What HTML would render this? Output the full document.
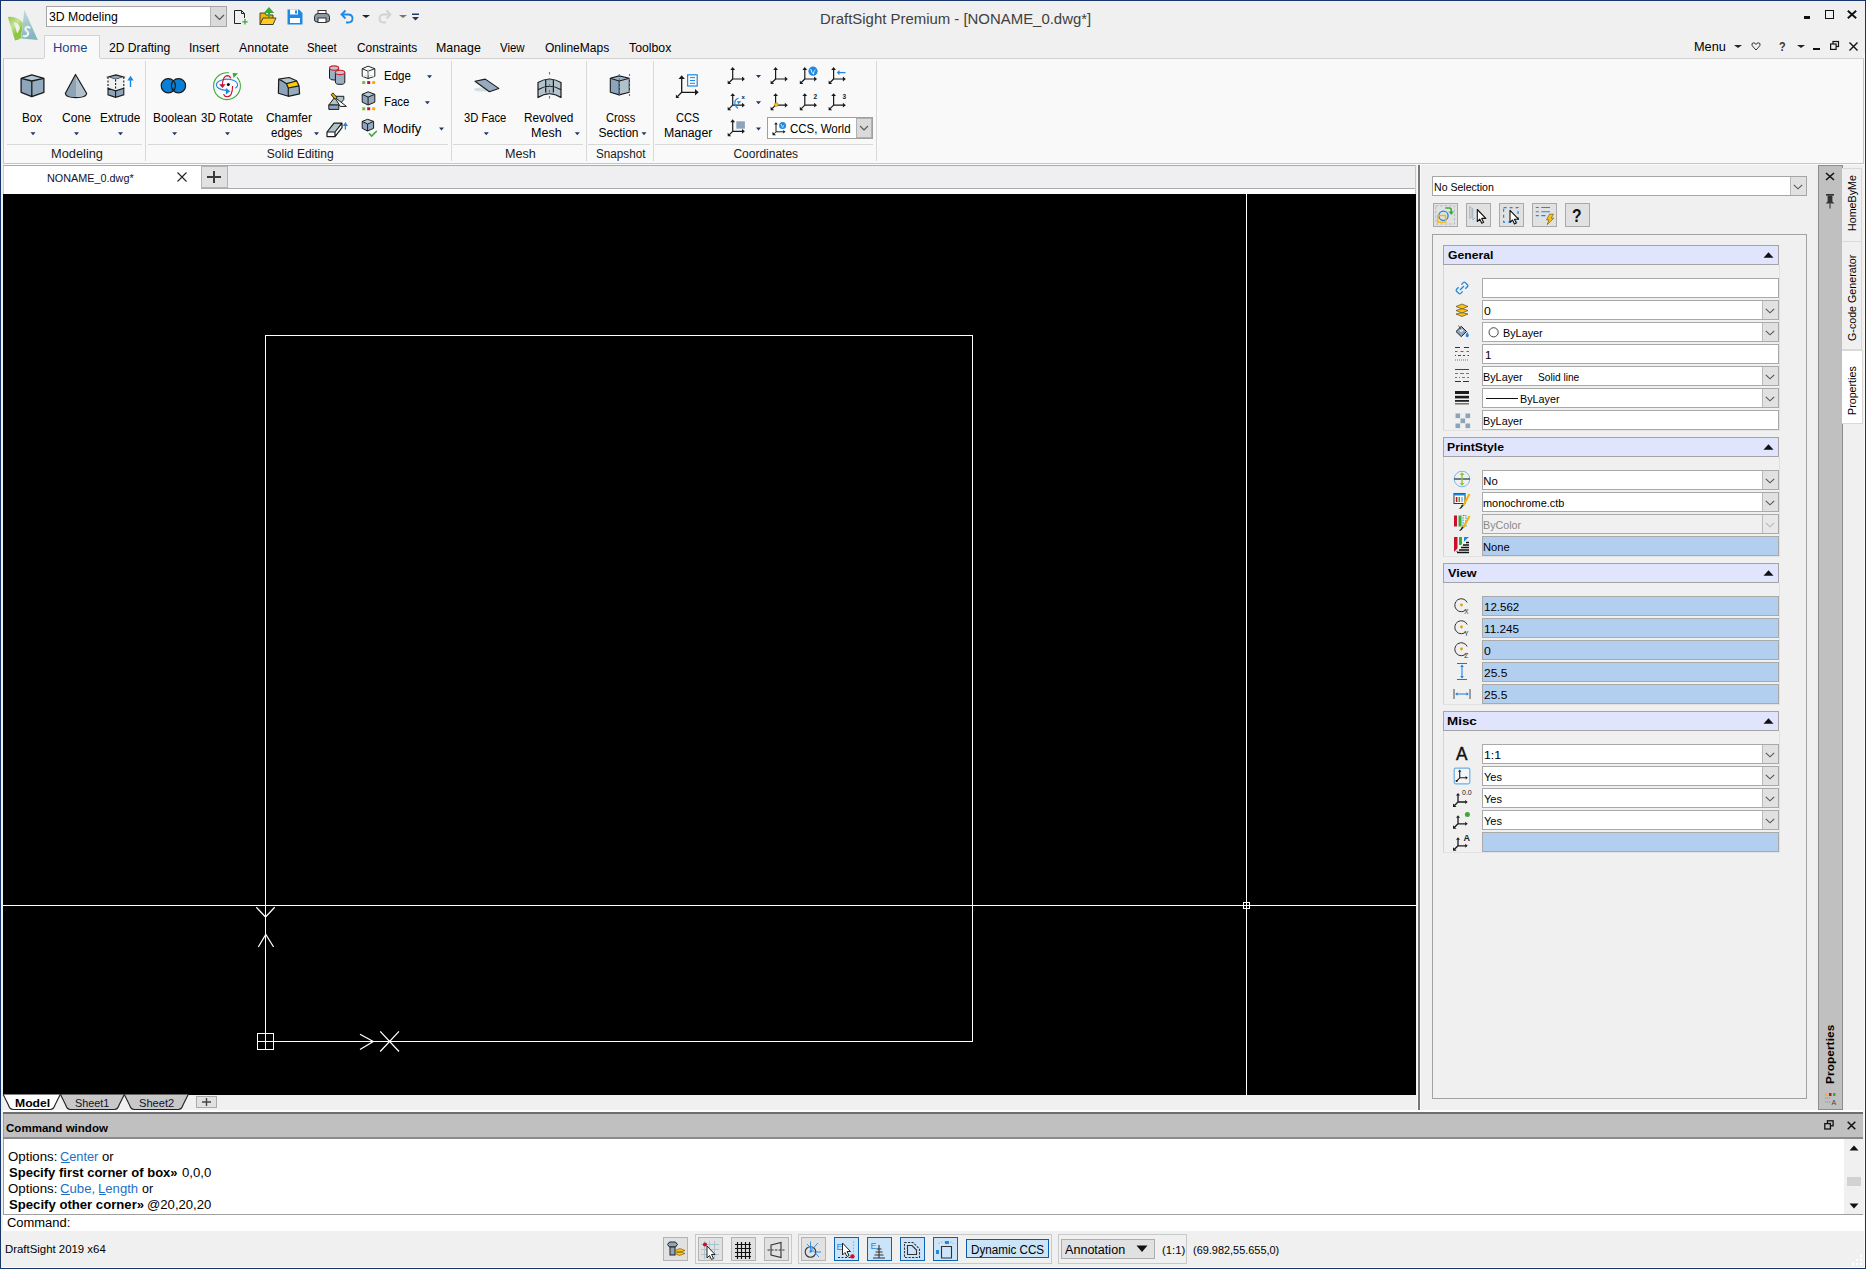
<!DOCTYPE html>
<html><head><meta charset="utf-8">
<style>
*{margin:0;padding:0;box-sizing:border-box}
html,body{width:1866px;height:1269px;overflow:hidden;background:#f0f0f0;font-family:"Liberation Sans",sans-serif;font-size:12px;color:#000}
.a{position:absolute}
.t{position:absolute;white-space:nowrap;line-height:1;transform-origin:0 0}
svg{position:absolute;overflow:visible}
</style></head><body>
<div class="t" style="left:820.41px;top:10.83px;font-size:15.00px;transform:scaleX(0.9948);color:#404040;">DraftSight Premium - [NONAME_0.dwg*]</div>
<svg style="left:0px;top:0px;" width="42" height="44" viewBox="0 0 42 44"><defs><linearGradient id="lg1" x1="0.2" y1="0" x2="0.8" y2="1"><stop offset="0" stop-color="#9ccd55"/><stop offset="0.35" stop-color="#c6e29c"/><stop offset="0.7" stop-color="#8cc43c"/><stop offset="1" stop-color="#93c84a"/></linearGradient><linearGradient id="lg2" x1="0" y1="0" x2="0.3" y2="1"><stop offset="0" stop-color="#c2dde2"/><stop offset="1" stop-color="#86b5bf"/></linearGradient></defs><path d="M24.3,9.8 L37.8,39.9 L21.3,38.5 Z" fill="url(#lg2)"/><path d="M7.8,17 Q13.5,15.8 19.1,19.2 Q22.5,21.5 22.9,23 L21,38.2 Q18,40 15,40.4 Z" fill="url(#lg1)"/><path d="M13.8,22.1 Q17.5,23 18.8,24.9 Q20,27 19.8,28.7 L17.2,33.8 Z" fill="#eef3ea"/><path d="M29.6,27.6 Q27.8,26.2 26,27.5 Q24.5,29.2 26.8,31 Q29,32.6 27.6,35 Q26,36.8 23.8,36" fill="none" stroke="#f0f3f3" stroke-width="2.1" stroke-linecap="round"/></svg>
<div class="a" style="left:46px;top:6px;width:181px;height:21px;background:#fff;border:1px solid #a5a5a5"></div>
<div class="a" style="left:210px;top:7px;width:16px;height:19px;background:#dadada;border-left:1px solid #b8b8b8"></div>
<svg style="left:214px;top:14px;" width="11" height="6.5" viewBox="0 0 11 6.5"><polyline points="1,1 5.5,5.5 10,1" fill="none" stroke="#555" stroke-width="1.2"/></svg>
<div class="t" style="left:48.51px;top:11.44px;font-size:12.50px;transform:scaleX(0.9800);color:#000;">3D Modeling</div>
<svg style="left:233px;top:9px;" width="16" height="16" viewBox="0 0 16 16"><path d="M1.5,1.5 L8.5,1.5 L11.5,4.5 L11.5,9 M8.5,1.5 L8.5,4.5 L11.5,4.5 M1.5,1.5 L1.5,14.5 L8,14.5" fill="none" stroke="#222" stroke-width="1"/><path d="M12,10 L12,15.5 M9.3,12.8 L14.7,12.8" stroke="#3aaa35" stroke-width="1.3"/></svg>
<svg style="left:259px;top:7px;" width="18" height="18" viewBox="0 0 18 18"><path d="M1,7 L1,17.5 L14,17.5 L14,8 L7,8 L6,6 L1,6 Z" fill="#f5b400" stroke="#333" stroke-width="0.9"/><path d="M1,17.5 L4,11 L17,11 L14,17.5 Z" fill="#ffcb1f" stroke="#333" stroke-width="0.9"/><path d="M10,10 L10,4 M7,5 L10,1.5 L13,5 Z" stroke="#3aaa35" fill="#3aaa35" stroke-width="2"/></svg>
<svg style="left:287px;top:9px;" width="16" height="16" viewBox="0 0 16 16"><path d="M0.5,0.5 L12,0.5 L15.5,4 L15.5,15.5 L0.5,15.5 Z" fill="#1e88e5"/><rect x="3" y="0.5" width="8" height="5" fill="#fff"/><rect x="8" y="1.5" width="2" height="3" fill="#1e88e5"/><rect x="3" y="9" width="10" height="5" fill="#fff"/></svg>
<svg style="left:314px;top:10px;" width="16" height="13" viewBox="0 0 16 13"><rect x="4" y="0.5" width="8" height="4" fill="#fff" stroke="#333"/><path d="M0.5,7 Q0.5,3.5 4,3.5 L12,3.5 Q15.5,3.5 15.5,7 L15.5,10 Q15.5,12 13,12 L3,12 Q0.5,12 0.5,10 Z" fill="#8d9aa6" stroke="#333"/><rect x="4" y="8" width="8" height="4.5" fill="#fff" stroke="#333"/></svg>
<svg style="left:340px;top:9px;" width="14" height="15" viewBox="0 0 14 15"><path d="M3,5.5 L8,5.5 Q12.5,5.5 12.5,9.5 Q12.5,13.5 8,13.5 L6,13.5" fill="none" stroke="#1e88e5" stroke-width="1.8"/><path d="M5.5,1.5 L1.5,5.5 L5.5,9.5" fill="none" stroke="#1e88e5" stroke-width="1.8"/></svg>
<svg style="left:361.5px;top:14.5px;" width="8" height="3" viewBox="0 0 8 3"><polygon points="0,0 8,0 4.0,3" fill="#222"/></svg>
<svg style="left:378px;top:9px;" width="14" height="15" viewBox="0 0 14 15"><path d="M11,5.5 L6,5.5 Q1.5,5.5 1.5,9.5 Q1.5,13.5 6,13.5 L8,13.5" fill="none" stroke="#d2d2d2" stroke-width="1.8"/><path d="M8.5,1.5 L12.5,5.5 L8.5,9.5" fill="none" stroke="#d2d2d2" stroke-width="1.8"/></svg>
<svg style="left:399.0px;top:14.5px;" width="8" height="3" viewBox="0 0 8 3"><polygon points="0,0 8,0 4.0,3" fill="#777"/></svg>
<svg style="left:412px;top:13px;" width="8" height="9" viewBox="0 0 8 9"><rect x="0" y="0.5" width="7" height="1.5" fill="#1f3864"/><polygon points="0,4 7,4 3.5,7.5" fill="#1f3864"/></svg>
<div class="a" style="left:1804px;top:15.5px;width:6px;height:3px;background:#111;"></div>
<div class="a" style="left:1825px;top:10px;width:9px;height:9px;background:transparent;border:1.3px solid #111"></div>
<svg style="left:1847px;top:10px;" width="10" height="9" viewBox="0 0 10 9"><path d="M0.8,0.8 L9.2,8.2 M9.2,0.8 L0.8,8.2" stroke="#111" stroke-width="1.9"/></svg>
<div class="a" style="left:44px;top:35px;width:56px;height:24px;background:#f9f9f9;border:1px solid #d3d3d3;border-bottom:none"></div>
<div class="t" style="left:53.17px;top:41.52px;font-size:12.40px;transform:scaleX(1.0414);color:#20408a;">Home</div>
<div class="t" style="left:109.09px;top:41.52px;font-size:12.40px;transform:scaleX(0.9779);color:#000;">2D Drafting</div>
<div class="t" style="left:188.71px;top:41.52px;font-size:12.40px;transform:scaleX(0.9758);color:#000;">Insert</div>
<div class="t" style="left:239.00px;top:41.52px;font-size:12.40px;color:#000;">Annotate</div>
<div class="t" style="left:307.49px;top:41.52px;font-size:12.40px;transform:scaleX(0.9136);color:#000;">Sheet</div>
<div class="t" style="left:356.81px;top:41.52px;font-size:12.40px;transform:scaleX(0.9596);color:#000;">Constraints</div>
<div class="t" style="left:436.01px;top:41.52px;font-size:12.40px;color:#000;">Manage</div>
<div class="t" style="left:500.34px;top:41.52px;font-size:12.40px;transform:scaleX(0.9249);color:#000;">View</div>
<div class="t" style="left:544.96px;top:41.52px;font-size:12.40px;transform:scaleX(0.9714);color:#000;">OnlineMaps</div>
<div class="t" style="left:629.05px;top:41.52px;font-size:12.40px;transform:scaleX(0.9895);color:#000;">Toolbox</div>
<div class="t" style="left:1694.48px;top:40.52px;font-size:12.40px;transform:scaleX(1.0273);color:#000;">Menu</div>
<svg style="left:1733.5px;top:45px;" width="8" height="3" viewBox="0 0 8 3"><polygon points="0,0 8,0 4.0,3" fill="#222"/></svg>
<svg style="left:1751px;top:42px;" width="10" height="9" viewBox="0 0 10 9"><path d="M5,8 L1.2,3.8 Q0,1 2.6,0.8 Q4.2,0.8 5,2.5 Q5.8,0.8 7.4,0.8 Q10,1 8.8,3.8 Z" fill="none" stroke="#333" stroke-width="1"/></svg>
<div class="t" style="left:1778.71px;top:41.44px;font-size:12.50px;font-weight:bold;transform:scaleX(0.8627);color:#333;">?</div>
<svg style="left:1796.5px;top:45px;" width="8" height="3" viewBox="0 0 8 3"><polygon points="0,0 8,0 4.0,3" fill="#222"/></svg>
<div class="a" style="left:1813px;top:48px;width:7px;height:2px;background:#111;"></div>
<svg style="left:1830px;top:41px;" width="9" height="9" viewBox="0 0 9 9"><rect x="3" y="0.5" width="5.5" height="5" fill="none" stroke="#111" stroke-width="1.2"/><rect x="0.6" y="3" width="5.5" height="5.4" fill="#f0f0f0" stroke="#111" stroke-width="1.2"/></svg>
<svg style="left:1849px;top:42px;" width="9" height="9" viewBox="0 0 9 9"><path d="M0.5,0.5 L8.5,8.5 M8.5,0.5 L0.5,8.5" stroke="#111" stroke-width="1.4"/></svg>
<div class="a" style="left:3px;top:58px;width:1861px;height:106px;background:#f9f9f9;border:1px solid #c6c6c6;border-top-color:#d2d2d2"></div>
<div class="a" style="left:3px;top:164px;width:1861px;height:1px;background:#fafafa;"></div>
<div class="a" style="left:44px;top:58px;width:56px;height:1px;background:#f9f9f9;"></div>
<div class="a" style="left:145px;top:61px;width:1px;height:100px;background:#d8d8d8;"></div>
<div class="a" style="left:451px;top:61px;width:1px;height:100px;background:#d8d8d8;"></div>
<div class="a" style="left:586px;top:61px;width:1px;height:100px;background:#d8d8d8;"></div>
<div class="a" style="left:653px;top:61px;width:1px;height:100px;background:#d8d8d8;"></div>
<div class="a" style="left:876px;top:61px;width:1px;height:100px;background:#d8d8d8;"></div>
<div class="a" style="left:7px;top:144px;width:135px;height:1px;background:#d8d8d8;"></div>
<div class="a" style="left:148px;top:144px;width:300px;height:1px;background:#d8d8d8;"></div>
<div class="a" style="left:453px;top:144px;width:130px;height:1px;background:#d8d8d8;"></div>
<div class="a" style="left:588px;top:144px;width:62px;height:1px;background:#d8d8d8;"></div>
<div class="a" style="left:655px;top:144px;width:218px;height:1px;background:#d8d8d8;"></div>
<div class="t" style="left:22.27px;top:111.66px;font-size:12.00px;transform:scaleX(0.9735);color:#000;">Box</div>
<div class="t" style="left:61.89px;top:111.66px;font-size:12.00px;transform:scaleX(1.0094);color:#000;">Cone</div>
<div class="t" style="left:100.46px;top:111.66px;font-size:12.00px;transform:scaleX(0.9764);color:#000;">Extrude</div>
<div class="t" style="left:152.65px;top:111.66px;font-size:12.00px;transform:scaleX(0.9929);color:#000;">Boolean</div>
<div class="t" style="left:200.74px;top:111.66px;font-size:12.00px;transform:scaleX(0.9626);color:#000;">3D Rotate</div>
<div class="t" style="left:265.90px;top:111.66px;font-size:12.00px;color:#000;">Chamfer</div>
<div class="t" style="left:271.04px;top:126.76px;font-size:12.00px;transform:scaleX(0.9591);color:#000;">edges</div>
<div class="t" style="left:383.58px;top:70.16px;font-size:12.00px;transform:scaleX(0.9615);color:#000;">Edge</div>
<div class="t" style="left:383.58px;top:95.86px;font-size:12.00px;transform:scaleX(0.9547);color:#000;">Face</div>
<div class="t" style="left:383.46px;top:122.86px;font-size:12.00px;transform:scaleX(1.0849);color:#000;">Modify</div>
<div class="t" style="left:464.15px;top:111.66px;font-size:12.00px;transform:scaleX(0.9337);color:#000;">3D Face</div>
<div class="t" style="left:524.05px;top:111.66px;font-size:12.00px;transform:scaleX(0.9855);color:#000;">Revolved</div>
<div class="t" style="left:531.00px;top:126.76px;font-size:12.00px;transform:scaleX(1.0435);color:#000;">Mesh</div>
<div class="t" style="left:605.84px;top:111.66px;font-size:12.00px;transform:scaleX(0.9340);color:#000;">Cross</div>
<div class="t" style="left:598.46px;top:126.76px;font-size:12.00px;color:#000;">Section</div>
<div class="t" style="left:676.45px;top:111.66px;font-size:12.00px;transform:scaleX(0.9222);color:#000;">CCS</div>
<div class="t" style="left:663.82px;top:126.76px;font-size:12.00px;transform:scaleX(1.0195);color:#000;">Manager</div>
<div class="t" style="left:50.77px;top:148.06px;font-size:12.00px;transform:scaleX(1.0678);color:#1a1a1a;">Modeling</div>
<div class="t" style="left:266.86px;top:148.06px;font-size:12.00px;color:#1a1a1a;">Solid Editing</div>
<div class="t" style="left:504.99px;top:148.06px;font-size:12.00px;transform:scaleX(1.0507);color:#1a1a1a;">Mesh</div>
<div class="t" style="left:596.47px;top:148.06px;font-size:12.00px;transform:scaleX(0.9741);color:#1a1a1a;">Snapshot</div>
<div class="t" style="left:733.40px;top:148.06px;font-size:12.00px;color:#1a1a1a;">Coordinates</div>
<svg style="left:0;top:0" width="1866" height="200"><path d="M31.8,74.9 L43.9,78.4 L31.8,81.0 L21.1,78.4 Z" fill="#b5c7d3"/><path d="M21.1,78.4 L31.8,81.0 L31.8,96.6 L21.1,92.3 Z" fill="#8ea4bb"/><path d="M31.8,81.0 L43.9,78.4 L43.9,92.3 L31.8,96.6 Z" fill="#94abc0"/><path d="M31.8,74.9 L43.9,78.4 L43.9,92.3 L31.8,96.6 L21.1,92.3 L21.1,78.4 Z M21.1,78.4 L31.8,81.0 L43.9,78.4 M31.8,81.0 L31.8,96.6" fill="none" stroke="#1a1a1a" stroke-width="1.3" stroke-linejoin="round"/><path d="M75.5,74.5 L65.3,93.5 Q65.5,97.5 76,97.6 L76,74.5 Z" fill="#8ea3b8"/><path d="M75.5,74.5 L86.7,93.5 Q86.5,97.5 76,97.6 L76,74.5 Z" fill="#b2c2cd"/><path d="M75.5,74.5 L65.3,93.5 Q66,97.6 76,97.6 Q86,97.6 86.7,93.5 Z" fill="none" stroke="#1a1a1a" stroke-width="1.2" stroke-linejoin="round"/><path d="M115.9,74.9 L123.8,77 L115.6,79.5 L108,77 Z" fill="#8ea4bb" stroke="#1a1a1a" stroke-width="1.1"/><path d="M108,77 L108,88 L115.6,90.5 L123.8,88 L123.8,77 L115.6,79.5 Z" fill="#f0f2f2"/><path d="M108,77 L108,88.5 M123.8,77 L123.8,88.5 M115.6,79.5 L115.6,90.5" stroke="#1a1a1a" stroke-width="1.1" stroke-dasharray="2,1.5"/><path d="M108,88.3 L115.6,90.8 L123.8,88.3 L123.8,94.8 L115.6,97.3 L108,94.8 Z" fill="#8ea4bb" stroke="#1a1a1a" stroke-width="1.1"/><path d="M115.6,90.8 L115.6,97.3" stroke="#1a1a1a" stroke-width="1.1"/><path d="M130.5,87 L130.5,79" stroke="#1e88e5" stroke-width="1.4"/><polygon points="127.3,80.5 133.7,80.5 130.5,75.8" fill="#1e88e5"/><polygon points="30.5,132.2 35.5,132.2 33.0,135.2" fill="#1f3864"/><polygon points="74.0,132.2 79.0,132.2 76.5,135.2" fill="#1f3864"/><polygon points="118.0,132.2 123.0,132.2 120.5,135.2" fill="#1f3864"/><polygon points="172.1,132.2 177.1,132.2 174.6,135.2" fill="#1f3864"/><polygon points="225.0,132.2 230.0,132.2 227.5,135.2" fill="#1f3864"/><polygon points="314.0,132.2 319.0,132.2 316.5,135.2" fill="#1f3864"/><polygon points="483.8,132.2 488.8,132.2 486.3,135.2" fill="#1f3864"/><polygon points="574.8,132.2 579.8,132.2 577.3,135.2" fill="#1f3864"/><polygon points="641.5,132.2 646.5,132.2 644.0,135.2" fill="#1f3864"/><circle cx="168.3" cy="85.7" r="7.1" fill="#0a7fd6"/><circle cx="178.5" cy="85.7" r="7.1" fill="#0a7fd6"/><circle cx="168.3" cy="85.7" r="7.1" fill="none" stroke="#1a1a1a" stroke-width="1.2"/><circle cx="178.5" cy="85.7" r="7.1" fill="none" stroke="#1a1a1a" stroke-width="1.2"/><path d="M228.86,72.83 A13.4,13.4 0 1,0 236.96,77.13" fill="none" stroke="#3aaa35" stroke-width="1.1"/><polygon points="232.6,72.9 238,73.3 233.6,78" fill="#3aaa35"/><path d="M235.35,88.25 A10.6,5.6 0 1,0 226.08,90.38" fill="none" stroke="#1e88e5" stroke-width="1.1"/><path d="M222.3,85.5 Q222.8,76.2 227,75.6 Q229.8,75.6 230.8,78.4 M232.6,86 Q232.5,96.8 227,96.8 Q224.5,96.6 223.5,94.3" fill="none" stroke="#c8102e" stroke-width="1.1"/><polygon points="219.2,84.2 225.6,84.2 222.4,87.9" fill="#c8102e"/><polygon points="225.9,88 225.9,94.6 230.2,91.2" fill="#1e88e5"/><circle cx="228.3" cy="84.5" r="1.5" fill="#111"/><path d="M278.7,79.1 L289.1,77.5 L296.6,80.8 L286.5,83.7 Q282,80.5 278.7,79.1 Z" fill="#b4c6d2"/><path d="M286.5,83.7 L296.6,81 L299,85.8 L288.3,88 Z" fill="#ffcc00"/><path d="M278.7,79.1 Q282,80.5 286.5,83.7 L288.3,88 L288.3,96.3 L278.4,93.3 Z" fill="#8ea4bb"/><path d="M288.3,88 L299,85.8 L299.6,93.9 L288.3,96.3 Z" fill="#94abc0"/><path d="M278.7,79.1 L289.1,77.5 L296.6,80.8 L299,85.8 L299.6,93.9 L288.3,96.3 L278.4,93.3 Z M278.7,79.1 Q282,80.5 286.5,83.7 L288.3,88 L288.3,96.3 M286.5,83.7 L296.6,81 M288.3,88 L299,85.8" fill="none" stroke="#1a1a1a" stroke-width="1.2" stroke-linejoin="round"/><path d="M329.5,68.1 L329.5,78.1 A4.6,2.3 0 0,0 338.6,78.1 L338.6,68.1 Z" fill="#9ab0c4" stroke="#1a1a1a" stroke-width="1.0"/><ellipse cx="334.1" cy="68.1" rx="4.6" ry="2.2" fill="#b9c9d1" stroke="#d0202a" stroke-width="1.1"/><path d="M335.4,72.4 L335.4,82.1 A4.7,2.3 0 0,0 344.8,82.1 L344.8,72.4 Z" fill="#9ab0c4" stroke="#1a1a1a" stroke-width="1.0"/><ellipse cx="340.1" cy="72.4" rx="4.7" ry="2.2" fill="#b9c9d1" stroke="#d0202a" stroke-width="1.1"/><path d="M328.8,105 L335.5,96.3 L343.8,96.3 L343.8,99.5 L338.8,105.2 Z" fill="#b0c4cc" stroke="#1a1a1a" stroke-width="1"/><path d="M328.8,105 L338.8,105 L338.8,109.4 L328.8,109.4 Z" fill="#8ea4bb" stroke="#1a1a1a" stroke-width="1"/><path d="M334.5,97 L346.4,106.4 L340.2,106.4 Z" fill="#fff" stroke="#1a1a1a" stroke-width="1"/><path d="M331.8,93.6 L336.3,98.6" stroke="#1a1a1a" stroke-width="3.2"/><path d="M332.2,94 L335.9,98.2" stroke="#f5b400" stroke-width="1.8"/><path d="M327,132 L334,123.2 L342,123.2 L335,132 Z" fill="#b0c4cc"/><path d="M327,132 L335,132 L335,136.6 L327,136.6 Z M335,132 L342,123.2 L342,127.6 L335,136.6 Z" fill="#fff"/><path d="M327,132 L334,123.2 L342,123.2 L342,127.6 L335,136.6 L327,136.6 Z M327,132 L335,132 L342,123.2 M335,132 L335,136.6" fill="none" stroke="#1a1a1a" stroke-width="1.2" stroke-linejoin="round"/><path d="M345.4,129.6 L345.4,125" stroke="#1e88e5" stroke-width="1.3"/><polygon points="342.8,126 348,126 345.4,122" fill="#1e88e5"/><path d="M368.1,66.2 L374.8,68.7 L368.1,71.2 L362.2,68.7 Z" fill="#fbfcfc"/><path d="M362.2,68.7 L368.1,71.2 L368.1,78.5 L362.2,76.3 Z" fill="#fbfcfc"/><path d="M368.1,71.2 L374.8,68.7 L374.8,76.3 L368.1,78.5 Z" fill="#fbfcfc"/><path d="M368.1,66.2 L374.8,68.7 L374.8,76.3 L368.1,78.5 L362.2,76.3 L362.2,68.7 Z M362.2,68.7 L368.1,71.2 L374.8,68.7 M368.1,71.2 L368.1,78.5" fill="none" stroke="#1a1a1a" stroke-width="0.95" stroke-linejoin="round"/><path d="M368.2,68.5 L368.2,74.5 L362.8,76.8 M368.2,74.5 L374.2,76.8" stroke="#c8d4dc" stroke-width="0.8" fill="none"/><path d="M368.1,91.8 L374.8,94.3 L368.1,97.1 L362.2,94.3 Z" fill="#b5c7d3"/><path d="M362.2,94.3 L368.1,97.1 L368.1,105.0 L362.2,102.2 Z" fill="#8ea4bb"/><path d="M368.1,97.1 L374.8,94.3 L374.8,102.2 L368.1,105.0 Z" fill="#94abc0"/><path d="M368.1,91.8 L374.8,94.3 L374.8,102.2 L368.1,105.0 L362.2,102.2 L362.2,94.3 Z M362.2,94.3 L368.1,97.1 L374.8,94.3 M368.1,97.1 L368.1,105.0" fill="none" stroke="#1a1a1a" stroke-width="1.0" stroke-linejoin="round"/><path d="M367.6,119.3 L373.6,121.4 L367.6,124.0 L362.2,121.4 Z" fill="#b5c7d3"/><path d="M362.2,121.4 L367.6,124.0 L367.6,131.0 L362.2,128.3 Z" fill="#8ea4bb"/><path d="M367.6,124.0 L373.6,121.4 L373.6,128.3 L367.6,131.0 Z" fill="#94abc0"/><path d="M367.6,119.3 L373.6,121.4 L373.6,128.3 L367.6,131.0 L362.2,128.3 L362.2,121.4 Z M362.2,121.4 L367.6,124.0 L373.6,121.4 M367.6,124.0 L367.6,131.0" fill="none" stroke="#1a1a1a" stroke-width="1.0" stroke-linejoin="round"/><rect x="362.2" y="81.1" width="3" height="2.9" fill="#7bbd2a"/><rect x="367.2" y="81.1" width="3" height="2.9" fill="#c8102e"/><rect x="372.2" y="81.1" width="3" height="2.9" fill="#ffa800"/><rect x="362.2" y="107.3" width="3" height="2.9" fill="#7bbd2a"/><rect x="367.2" y="107.3" width="3" height="2.9" fill="#c8102e"/><rect x="372.2" y="107.3" width="3" height="2.9" fill="#ffa800"/><path d="M369,133.2 L371.6,136 L376.8,131" fill="none" stroke="#3aaa35" stroke-width="1.6"/><polygon points="427.0,75.2 432.0,75.2 429.5,78.2" fill="#1f3864"/><polygon points="424.9,101.2 429.9,101.2 427.4,104.2" fill="#1f3864"/><polygon points="439.0,127.4 444.0,127.4 441.5,130.4" fill="#1f3864"/><ellipse cx="482" cy="89.5" rx="8" ry="2" fill="#c9d6dc" opacity="0.8"/><path d="M475,81.2 L485.3,79.1 L498.8,88.4 L489.4,91.7 Z" fill="#94abc0" stroke="#1a1a1a" stroke-width="1.1" stroke-linejoin="round"/><path d="M538,82.5 Q549.5,75.5 561,82.5 L561,97.5 Q549.5,90 538,97.5 Z" fill="#b4c4cc"/><path d="M545.7,79.3 L553.4,79.3 L553.4,93 L545.7,93 Z" fill="#a9bac4"/><path d="M538,82.5 Q549.5,75.5 561,82.5 L561,97.5 Q549.5,90 538,97.5 Z M538,89.8 Q549.5,82.7 561,89.8 M545.7,79.2 L545.7,92.5 M553.4,79.2 L553.4,92.5" fill="none" stroke="#1a1a1a" stroke-width="1.2" stroke-linejoin="round"/><path d="M549.5,72 L549.5,98.5" stroke="#1e88e5" stroke-width="1.1" stroke-dasharray="2.5,3.5"/><path d="M619.2,75.9 L629.3,78.2 L619.2,81.0 L610.3,78.2 Z" fill="#a3b6c5"/><path d="M610.3,78.2 L619.2,81.0 L619.2,94.9 L610.3,92.2 Z" fill="#8ea4bb"/><path d="M619.2,81.0 L629.3,78.2 L629.3,92.2 L619.2,94.9 Z" fill="#b1c1c9"/><path d="M619.2,75.9 L629.3,78.2 L629.3,92.2 L619.2,94.9 L610.3,92.2 L610.3,78.2 Z M610.3,78.2 L619.2,81.0 L629.3,78.2 M619.2,81.0 L619.2,94.9" fill="none" stroke="#1a1a1a" stroke-width="1.1" stroke-linejoin="round"/><path d="M619.3,74 L619.3,96.5 M629.5,74 L629.5,96.5" stroke="#1e88e5" stroke-width="1.1" stroke-dasharray="2,2"/><path d="M681.7,92.3 L681.7,78.5 M681.7,92.3 L695.5,92.3 M681.7,92.3 L677.4,96.6" stroke="#1a1a1a" stroke-width="1.3" fill="none"/><polygon points="678.5,79.0 684.9,79.0 681.7,75.3" fill="#1a1a1a"/><polygon points="695.0,89.1 695.0,95.5 698.7,92.3" fill="#1a1a1a"/><polygon points="675.9,98.1 675.9,94.6 679.4,98.1" fill="#1a1a1a"/><rect x="687.6" y="74.8" width="9.6" height="11.2" fill="none" stroke="#1e88e5" stroke-width="1.2"/><path d="M690,77.6 L695,77.6 M690,80.5 L695,80.5 M690,83.3 L695,83.3" stroke="#1e88e5" stroke-width="1"/><path d="M732.7,79.0 L732.7,69.4 M732.7,79.0 L742.5,79.0 M732.7,79.0 L729.2,82.5" stroke="#1a1a1a" stroke-width="1.2" fill="none"/><polygon points="730.3,69.9 735.1,69.9 732.7,67.0" fill="#1a1a1a"/><polygon points="742.0,76.6 742.0,81.4 744.9,79.0" fill="#1a1a1a"/><polygon points="727.7,84.0 727.7,80.5 731.2,84.0" fill="#1a1a1a"/><path d="M775.6,79.0 L775.6,69.4 M775.6,79.0 L785.4,79.0 M775.6,79.0 L772.1,82.5" stroke="#1a1a1a" stroke-width="1.2" fill="none"/><polygon points="773.2,69.9 778.0,69.9 775.6,67.0" fill="#1a1a1a"/><polygon points="784.9,76.6 784.9,81.4 787.8,79.0" fill="#1a1a1a"/><polygon points="770.6,84.0 770.6,80.5 774.1,84.0" fill="#1a1a1a"/><path d="M804.8,79.0 L804.8,69.4 M804.8,79.0 L814.6,79.0 M804.8,79.0 L801.3,82.5" stroke="#1a1a1a" stroke-width="1.2" fill="none"/><polygon points="802.4,69.9 807.2,69.9 804.8,67.0" fill="#1a1a1a"/><polygon points="814.1,76.6 814.1,81.4 817.0,79.0" fill="#1a1a1a"/><polygon points="799.8,84.0 799.8,80.5 803.3,84.0" fill="#1a1a1a"/><path d="M833.6,79.0 L833.6,69.4 M833.6,79.0 L843.4,79.0 M833.6,79.0 L830.1,82.5" stroke="#1a1a1a" stroke-width="1.2" fill="none"/><polygon points="831.2,69.9 836.0,69.9 833.6,67.0" fill="#1a1a1a"/><polygon points="842.9,76.6 842.9,81.4 845.8,79.0" fill="#1a1a1a"/><polygon points="828.6,84.0 828.6,80.5 832.1,84.0" fill="#1a1a1a"/><path d="M732.7,105.2 L732.7,95.6 M732.7,105.2 L742.5,105.2 M732.7,105.2 L729.2,108.7" stroke="#1a1a1a" stroke-width="1.2" fill="none"/><polygon points="730.3,96.1 735.1,96.1 732.7,93.2" fill="#1a1a1a"/><polygon points="742.0,102.8 742.0,107.6 744.9,105.2" fill="#1a1a1a"/><polygon points="727.7,110.2 727.7,106.7 731.2,110.2" fill="#1a1a1a"/><path d="M775.6,105.2 L775.6,95.6 M775.6,105.2 L785.4,105.2 M775.6,105.2 L772.1,108.7" stroke="#1a1a1a" stroke-width="1.2" fill="none"/><polygon points="773.2,96.1 778.0,96.1 775.6,93.2" fill="#1a1a1a"/><polygon points="784.9,102.8 784.9,107.6 787.8,105.2" fill="#1a1a1a"/><polygon points="770.6,110.2 770.6,106.7 774.1,110.2" fill="#1a1a1a"/><path d="M804.8,105.2 L804.8,95.6 M804.8,105.2 L814.6,105.2 M804.8,105.2 L801.3,108.7" stroke="#1a1a1a" stroke-width="1.2" fill="none"/><polygon points="802.4,96.1 807.2,96.1 804.8,93.2" fill="#1a1a1a"/><polygon points="814.1,102.8 814.1,107.6 817.0,105.2" fill="#1a1a1a"/><polygon points="799.8,110.2 799.8,106.7 803.3,110.2" fill="#1a1a1a"/><path d="M833.6,105.2 L833.6,95.6 M833.6,105.2 L843.4,105.2 M833.6,105.2 L830.1,108.7" stroke="#1a1a1a" stroke-width="1.2" fill="none"/><polygon points="831.2,96.1 836.0,96.1 833.6,93.2" fill="#1a1a1a"/><polygon points="842.9,102.8 842.9,107.6 845.8,105.2" fill="#1a1a1a"/><polygon points="828.6,110.2 828.6,106.7 832.1,110.2" fill="#1a1a1a"/><path d="M732.7,131.3 L732.7,121.7 M732.7,131.3 L742.5,131.3 M732.7,131.3 L729.2,134.8" stroke="#1a1a1a" stroke-width="1.2" fill="none"/><polygon points="730.3,122.2 735.1,122.2 732.7,119.3" fill="#1a1a1a"/><polygon points="742.0,128.9 742.0,133.7 744.9,131.3" fill="#1a1a1a"/><polygon points="727.7,136.3 727.7,132.8 731.2,136.3" fill="#1a1a1a"/><circle cx="813" cy="71.2" r="4.6" fill="#1e88e5"/><path d="M810.8,69 Q811.5,73.5 813.5,74 L813.8,71.5 L815.5,70" stroke="#fff" stroke-width="0.9" fill="none"/><path d="M845.5,72.6 L838,72.6" stroke="#1e88e5" stroke-width="1.3"/><polygon points="839.5,70 839.5,75.2 836.8,72.6" fill="#1e88e5"/><path d="M738.5,98 Q734,100 735,104 Q736,107.5 738,108.5" fill="none" stroke="#1e88e5" stroke-width="1.2"/><polygon points="737,101 741.5,101.5 738.2,104.2" fill="#1e88e5"/><text x="741.5" y="98.8" font-size="6" font-family="Liberation Sans" font-weight="bold" fill="#222">x</text><circle cx="776.3" cy="104.6" r="1.9" fill="#ffc20e" stroke="#9a7000" stroke-width="0.5"/><text x="813.5" y="98.8" font-size="6.5" font-family="Liberation Sans" font-weight="bold" fill="#222">2</text><text x="842.6" y="98.8" font-size="6.5" font-family="Liberation Sans" font-weight="bold" fill="#222">3</text><rect x="736.3" y="121.3" width="8.6" height="7.4" fill="#8ea4bb"/><polygon points="756.0,75.0 761.0,75.0 758.5,78.0" fill="#1f3864"/><polygon points="756.0,101.2 761.0,101.2 758.5,104.2" fill="#1f3864"/><polygon points="756.0,127.4 761.0,127.4 758.5,130.4" fill="#1f3864"/><rect x="767.5" y="117.5" width="105" height="21" fill="#fff" stroke="#9f9f9f"/><rect x="856.5" y="118.5" width="15" height="19" fill="#dadada" stroke="#b0b0b0"/><polyline points="860,126 864,130 868,126" fill="none" stroke="#555" stroke-width="1.1"/><path d="M776.0,131.8 L776.0,124.1 M776.0,131.8 L783.7,131.8 M776.0,131.8 L774.0,133.8" stroke="#1a1a1a" stroke-width="1" fill="none"/><polygon points="774.2,124.6 777.8,124.6 776.0,122.3" fill="#1a1a1a"/><polygon points="783.2,130.0 783.2,133.6 785.5,131.8" fill="#1a1a1a"/><polygon points="772.5,135.3 772.5,131.8 776.0,135.3" fill="#1a1a1a"/><circle cx="782.6" cy="125.5" r="3.5" fill="#1e88e5"/><path d="M781,124 Q781.5,127 783,127.5 L783.2,125.8 L784.3,124.8" stroke="#fff" stroke-width="0.7" fill="none"/></svg>
<div class="t" style="left:789.72px;top:122.86px;font-size:12.00px;transform:scaleX(0.9589);color:#000;">CCS, World</div>
<div class="a" style="left:3px;top:165px;width:1413px;height:1px;background:#ababab;"></div>
<div class="a" style="left:3px;top:188px;width:1413px;height:1px;background:#ababab;"></div>
<div class="a" style="left:3px;top:166px;width:1413px;height:22px;background:#efeff1;"></div>
<div class="a" style="left:3px;top:189px;width:1413px;height:5px;background:#fff;"></div>
<div class="a" style="left:3px;top:166px;width:198px;height:28px;background:#fff;border-left:1px solid #d0d0d0"></div>
<div class="t" style="left:47.33px;top:172.71px;font-size:11.00px;transform:scaleX(0.9838);color:#101030;">NONAME_0.dwg*</div>
<svg style="left:177px;top:172px;" width="10" height="10" viewBox="0 0 10 10"><path d="M0.5,0.5 L9.5,9.5 M9.5,0.5 L0.5,9.5" stroke="#222" stroke-width="1.1" fill="none"/></svg>
<div class="a" style="left:201px;top:166px;width:27px;height:22px;background:#e1e1e1;border:1px solid #b4b4b4"></div>
<div class="a" style="left:207px;top:176px;width:14px;height:2px;background:#3a3a3a;"></div>
<div class="a" style="left:213px;top:171px;width:2px;height:12px;background:#3a3a3a;"></div>
<div class="a" style="left:1415px;top:165px;width:1px;height:29px;background:#c8c8c8;"></div>
<div class="a" style="left:3px;top:194px;width:1413px;height:901px;background:#000;"></div>
<svg style="left:0;top:0" width="1866" height="1269"><rect x="265.5" y="335.5" width="707" height="706" stroke="#fff" stroke-width="1" fill="none" shape-rendering="crispEdges"/><path d="M3,905.5 L1416,905.5 M1246.5,194 L1246.5,1095" stroke="#fff" stroke-width="1" fill="none" shape-rendering="crispEdges"/><rect x="1243.5" y="902.5" width="6" height="6" stroke="#fff" stroke-width="1" fill="none" shape-rendering="crispEdges"/><rect x="257.5" y="1033.5" width="16" height="16" stroke="#fff" stroke-width="1" fill="none" shape-rendering="crispEdges"/><path d="M257.5,1041.5 L273.5,1041.5 M265.5,1033.5 L265.5,1049.5" stroke="#fff" stroke-width="1" fill="none" shape-rendering="crispEdges"/><path d="M256.3,907.3 L265.5,917 L274.7,907.3 M258.3,947 L265.8,934.5 L273.6,947 M360,1034.3 L373.3,1041.5 L360,1049.5 M380.2,1031.4 L399,1051.5 M399,1031.4 L380.2,1051.5" stroke="#fff" stroke-width="1.25" fill="none"/></svg>
<svg style="left:0;top:0" width="1866" height="1269"><path d="M124.3,1094.5 L129.5,1105 Q130.8,1109.5 134.3,1109.5 L178.2,1109.5 Q181.7,1109.5 183.0,1105 L188.2,1094.5" fill="#c8c8c8" stroke="#222" stroke-width="1.1"/><path d="M60.5,1094.5 L65.7,1105 Q67.0,1109.5 70.5,1109.5 L114.3,1109.5 Q117.8,1109.5 119.1,1105 L124.3,1094.5" fill="#c8c8c8" stroke="#222" stroke-width="1.1"/><path d="M3.2,1094.5 L8.4,1105 Q9.7,1109.5 13.2,1109.5 L50.2,1109.5 Q53.7,1109.5 55.0,1105 L60.2,1094.5" fill="#fff" stroke="#222" stroke-width="1.1"/><rect x="196.5" y="1096.5" width="20" height="11" fill="#e1e1e1" stroke="#aaa"/><path d="M202,1102 L211,1102 M206.5,1098 L206.5,1106" stroke="#444" stroke-width="1.4"/></svg>
<div class="t" style="left:14.61px;top:1098.28px;font-size:11.50px;font-weight:bold;transform:scaleX(1.0574);color:#000;">Model</div>
<div class="t" style="left:75.41px;top:1098.28px;font-size:11.50px;transform:scaleX(0.9430);color:#101030;">Sheet1</div>
<div class="t" style="left:139.00px;top:1098.28px;font-size:11.50px;transform:scaleX(0.9643);color:#101030;">Sheet2</div>
<div class="a" style="left:1418px;top:165px;width:2px;height:945px;background:#747474;"></div>
<div class="a" style="left:1420px;top:165px;width:1px;height:945px;background:#fbfbfb;"></div>
<div class="a" style="left:1417px;top:165px;width:1px;height:945px;background:#fbfbfb;"></div>
<div class="a" style="left:1432px;top:176px;width:375px;height:20px;background:#fff;border:1px solid #a6a6a6"></div>
<div class="a" style="left:1790px;top:177px;width:16px;height:18px;background:#e1e1e1;border-left:1px solid #b9b9b9"></div>
<svg style="left:1793px;top:184px" width="10" height="6" viewBox="0 0 10 6"><polyline points="0.8,0.8 5,4.8 9.2,0.8" fill="none" stroke="#555" stroke-width="1.1"/></svg>
<div class="t" style="left:1434.35px;top:181.74px;font-size:11.20px;transform:scaleX(0.9438);color:#000;">No Selection</div>
<div class="a" style="left:1433px;top:203px;width:25px;height:24px;background:#e1e1e1;border:1px solid #a9a9a9"></div>
<div class="a" style="left:1466px;top:203px;width:25px;height:24px;background:#e1e1e1;border:1px solid #a9a9a9"></div>
<div class="a" style="left:1499px;top:203px;width:25px;height:24px;background:#e1e1e1;border:1px solid #a9a9a9"></div>
<div class="a" style="left:1532px;top:203px;width:25px;height:24px;background:#e1e1e1;border:1px solid #a9a9a9"></div>
<div class="a" style="left:1565px;top:203px;width:25px;height:24px;background:#e1e1e1;border:1px solid #a9a9a9"></div>
<svg style="left:1434px;top:204px" width="22" height="22" viewBox="0 0 22 22"><rect x="1.8" y="1.8" width="18.6" height="18.2" fill="none" stroke="#a9bccb" stroke-width="1" stroke-dasharray="2.6,1.8"/><circle cx="9.5" cy="11.8" r="4.6" fill="none" stroke="#1e88e5" stroke-width="1.3"/><rect x="3.8" y="11.5" width="7.8" height="6.6" fill="none" stroke="#ffb400" stroke-width="1.4"/><path d="M11.3,4 L15.5,4 Q17.2,4 17.2,6 L17.2,8" fill="none" stroke="#3aaa35" stroke-width="1.6"/><polygon points="14.5,7.6 20,7.6 17.2,11" fill="#3aaa35"/></svg>
<svg style="left:1467px;top:204px" width="22" height="22" viewBox="0 0 22 22"><path d="M2.8,2.5 L2.8,14.5 L5,12.5 L5,4.5 Z M5.8,4 L5.8,16 L8,14" fill="none" stroke="#9cb3c4" stroke-width="1"/><path d="M10.3,5.5 L10.3,17.5 L12.8,15.2 L14.8,19.2 L16.6,18.3 L14.7,14.4 L18.8,14.4 Z" fill="#fff" stroke="#111" stroke-width="1.1" stroke-linejoin="round"/></svg>
<svg style="left:1500px;top:204px" width="22" height="22" viewBox="0 0 22 22"><rect x="3.6" y="3.6" width="14.5" height="14.6" fill="none" stroke="#1e88e5" stroke-width="1.2" stroke-dasharray="3,3"/><path d="M10,6.3 L10,18.3 L12.5,16 L14.5,20 L16.3,19.1 L14.4,15.2 L18.5,15.2 Z" fill="#fff" stroke="#111" stroke-width="1.1" stroke-linejoin="round"/></svg>
<svg style="left:1533px;top:204px" width="22" height="22" viewBox="0 0 22 22"><path d="M2.8,3.5 L5.8,3.5 M8.3,3.5 L17,3.5 M2.8,7.8 L5.8,7.8 M8.3,7.8 L17,7.8 M2.8,11.6 L5.8,11.6 M8.3,11.6 L12.5,11.6" stroke="#1e88e5" stroke-width="1.1"/><polygon points="16.5,10.2 20.5,10.2 18.2,14.2 20.8,14.2 14.2,20.6 16,15.8 13.5,15.8" fill="#ffc20e" stroke="#5a4a10" stroke-width="0.6"/></svg>
<div class="t" style="left:1572.29px;top:207.17px;font-size:18.50px;font-weight:bold;transform:scaleX(0.8479);color:#111;">?</div>
<div class="a" style="left:1432px;top:234px;width:375px;height:865px;background:transparent;border:1px solid #a2a2a2"></div>
<div class="a" style="left:1443px;top:245px;width:336px;height:20px;background:#e0e4fc;border:1px solid #a4a4a4"></div>
<div class="t" style="left:1447.51px;top:250.48px;font-size:11.50px;font-weight:bold;transform:scaleX(1.0584);color:#000;">General</div>
<svg style="left:1763px;top:252px" width="11" height="6" viewBox="0 0 11 6"><polygon points="0.5,5.8 10.5,5.8 5.5,0.3" fill="#111"/></svg>
<div class="a" style="left:1443px;top:265px;width:337px;height:166px;background:transparent;border-left:1px solid #d5d5d5;border-right:1px solid #e0e0e0;border-bottom:1px solid #e2e2e2"></div>
<div class="a" style="left:1482px;top:278px;width:297px;height:20px;background:#fff;border:1px solid #a9a9a9"></div>
<div class="a" style="left:1482px;top:300px;width:297px;height:20px;background:#fff;border:1px solid #a9a9a9"></div>
<div class="a" style="left:1762px;top:301px;width:16px;height:18px;background:#e1e1e1;border-left:1px solid #b9b9b9"></div>
<svg style="left:1765px;top:308px" width="10" height="6" viewBox="0 0 10 6"><polyline points="0.8,0.8 5,4.8 9.2,0.8" fill="none" stroke="#555" stroke-width="1.1"/></svg>
<div class="t" style="left:1483.81px;top:306.45px;font-size:11.30px;transform:scaleX(1.0878);color:#000;">0</div>
<div class="a" style="left:1482px;top:322px;width:297px;height:20px;background:#fff;border:1px solid #a9a9a9"></div>
<div class="a" style="left:1762px;top:323px;width:16px;height:18px;background:#e1e1e1;border-left:1px solid #b9b9b9"></div>
<svg style="left:1765px;top:330px" width="10" height="6" viewBox="0 0 10 6"><polyline points="0.8,0.8 5,4.8 9.2,0.8" fill="none" stroke="#555" stroke-width="1.1"/></svg>
<svg style="left:1488px;top:327px" width="12" height="11" viewBox="0 0 12 11"><circle cx="5.6" cy="5.3" r="4.6" fill="none" stroke="#333" stroke-width="0.9"/></svg>
<div class="t" style="left:1503.14px;top:328.45px;font-size:11.30px;transform:scaleX(0.9568);color:#000;">ByLayer</div>
<div class="a" style="left:1482px;top:344px;width:297px;height:20px;background:#fff;border:1px solid #a9a9a9"></div>
<div class="t" style="left:1484.64px;top:350.45px;font-size:11.30px;transform:scaleX(1.0172);color:#000;">1</div>
<div class="a" style="left:1482px;top:366px;width:297px;height:20px;background:#fff;border:1px solid #a9a9a9"></div>
<div class="a" style="left:1762px;top:367px;width:16px;height:18px;background:#e1e1e1;border-left:1px solid #b9b9b9"></div>
<svg style="left:1765px;top:374px" width="10" height="6" viewBox="0 0 10 6"><polyline points="0.8,0.8 5,4.8 9.2,0.8" fill="none" stroke="#555" stroke-width="1.1"/></svg>
<div class="t" style="left:1483.14px;top:372.45px;font-size:11.30px;transform:scaleX(0.9568);color:#000;">ByLayer</div>
<div class="t" style="left:1538.24px;top:372.45px;font-size:11.30px;transform:scaleX(0.8995);color:#000;">Solid line</div>
<div class="a" style="left:1482px;top:388px;width:297px;height:20px;background:#fff;border:1px solid #a9a9a9"></div>
<div class="a" style="left:1762px;top:389px;width:16px;height:18px;background:#e1e1e1;border-left:1px solid #b9b9b9"></div>
<svg style="left:1765px;top:396px" width="10" height="6" viewBox="0 0 10 6"><polyline points="0.8,0.8 5,4.8 9.2,0.8" fill="none" stroke="#555" stroke-width="1.1"/></svg>
<div class="a" style="left:1486px;top:398px;width:32px;height:1px;background:#111;"></div>
<div class="t" style="left:1519.64px;top:394.45px;font-size:11.30px;transform:scaleX(0.9544);color:#000;">ByLayer</div>
<div class="a" style="left:1482px;top:410px;width:297px;height:20px;background:#fff;border:1px solid #a9a9a9"></div>
<div class="t" style="left:1483.14px;top:416.45px;font-size:11.30px;transform:scaleX(0.9568);color:#000;">ByLayer</div>
<svg style="left:1455px;top:281px" width="14" height="14" viewBox="0 0 14 14"><path d="M6.3,3.6 L8.3,1.6 Q9.3,0.6 10.3,1.6 L12.4,3.7 Q13.4,4.7 12.4,5.7 L10.3,7.8 M7.7,10.4 L5.7,12.4 Q4.7,13.4 3.7,12.4 L1.6,10.3 Q0.6,9.3 1.6,8.3 L3.6,6.3 M5,9 L9,5" fill="none" stroke="#1e88e5" stroke-width="1.3"/></svg>
<svg style="left:1455px;top:303px" width="14" height="14" viewBox="0 0 14 14"><path d="M7,9.5 L13,11 L7,13.5 L1,11 Z" fill="#ffc20e" stroke="#333" stroke-width="0.6"/><path d="M7,5.5 L13,7.5 L7,10 L1,7.5 Z" fill="#ffc20e" stroke="#333" stroke-width="0.6"/><path d="M7,1 L13,3.5 L7,6 L1,3.5 Z" fill="#ffc20e" stroke="#333" stroke-width="0.6"/></svg>
<svg style="left:1455px;top:325px" width="15" height="14" viewBox="0 0 15 14"><path d="M1,6.5 L6.3,1.3 L11.5,6.5 L6.3,11.7 Z" fill="#8ea4bb" stroke="#222" stroke-width="1"/><circle cx="6.3" cy="5.3" r="1.5" fill="#fff"/><path d="M3.5,0.5 L6.3,5.3" stroke="#222" stroke-width="0.7"/><path d="M12.2,7 Q14.5,10 13.5,11.5 Q12.2,13 10.9,11.5 Q10,10 12.2,7 Z" fill="#1e88e5"/></svg>
<svg style="left:1454px;top:346px" width="16" height="17" viewBox="0 0 16 17"><path d="M1,1.5 L6,1.5 M10,1.5 L15,1.5" stroke="#333" stroke-width="1"/><path d="M1,5.5 L3.5,5.5 M6.5,5.5 L9.5,5.5 M12.5,5.5 L15,5.5" stroke="#666" stroke-width="1.2"/><path d="M1,9.5 L2,9.5 M4,9.5 L7,9.5 M9,9.5 L11,9.5 M13.5,9.5 L15,9.5" stroke="#444" stroke-width="1.1"/><path d="M1,14 L15,14" stroke="#777" stroke-width="1.2" stroke-dasharray="1,1"/></svg>
<svg style="left:1454px;top:368px" width="16" height="16" viewBox="0 0 16 16"><path d="M1,1.5 L15,1.5" stroke="#444" stroke-width="1"/><path d="M1,5.5 L4,5.5 M6,5.5 L10,5.5 M12,5.5 L15,5.5" stroke="#777" stroke-width="1.2"/><path d="M1,9.5 L3,9.5 M5,9.5 L6,9.5 M8,9.5 L11,9.5 M13,9.5 L15,9.5" stroke="#777" stroke-width="1.2"/><path d="M1,13.5 L7,13.5 M9,13.5 L15,13.5" stroke="#333" stroke-width="1.2"/></svg>
<svg style="left:1454px;top:390px" width="16" height="16" viewBox="0 0 16 16"><rect x="1" y="1" width="14" height="3" fill="#1c1c1c"/><rect x="1" y="5.8" width="14" height="2.6" fill="#1c1c1c"/><rect x="1" y="10" width="14" height="1.8" fill="#222"/><rect x="1" y="13.3" width="14" height="1.1" fill="#444"/></svg>
<svg style="left:1454.5px;top:412.5px" width="16" height="16" viewBox="0 0 16 16"><rect x="0.5" y="0.5" width="4.6" height="4.6" fill="#8ca3b9"/><rect x="10.5" y="0.5" width="4.6" height="4.6" fill="#8ca3b9"/><rect x="5.5" y="5.5" width="4.6" height="4.6" fill="#8ca3b9"/><rect x="0.5" y="10.5" width="4.6" height="4.6" fill="#8ca3b9"/><rect x="10.5" y="10.5" width="4.6" height="4.6" fill="#8ca3b9"/></svg>
<div class="a" style="left:1443px;top:437px;width:336px;height:20px;background:#e0e4fc;border:1px solid #a4a4a4"></div>
<div class="t" style="left:1447.21px;top:442.48px;font-size:11.50px;font-weight:bold;transform:scaleX(1.0629);color:#000;">PrintStyle</div>
<svg style="left:1763px;top:444px" width="11" height="6" viewBox="0 0 11 6"><polygon points="0.5,5.8 10.5,5.8 5.5,0.3" fill="#111"/></svg>
<div class="a" style="left:1443px;top:457px;width:337px;height:100px;background:transparent;border-left:1px solid #d5d5d5;border-right:1px solid #e0e0e0;border-bottom:1px solid #e2e2e2"></div>
<div class="a" style="left:1482px;top:470px;width:297px;height:20px;background:#fff;border:1px solid #a9a9a9"></div>
<div class="a" style="left:1762px;top:471px;width:16px;height:18px;background:#e1e1e1;border-left:1px solid #b9b9b9"></div>
<svg style="left:1765px;top:478px" width="10" height="6" viewBox="0 0 10 6"><polyline points="0.8,0.8 5,4.8 9.2,0.8" fill="none" stroke="#555" stroke-width="1.1"/></svg>
<div class="t" style="left:1483.30px;top:476.45px;font-size:11.30px;color:#000;">No</div>
<div class="a" style="left:1482px;top:492px;width:297px;height:20px;background:#fff;border:1px solid #a9a9a9"></div>
<div class="a" style="left:1762px;top:493px;width:16px;height:18px;background:#e1e1e1;border-left:1px solid #b9b9b9"></div>
<svg style="left:1765px;top:500px" width="10" height="6" viewBox="0 0 10 6"><polyline points="0.8,0.8 5,4.8 9.2,0.8" fill="none" stroke="#555" stroke-width="1.1"/></svg>
<div class="t" style="left:1483.29px;top:498.45px;font-size:11.30px;transform:scaleX(0.9669);color:#000;">monochrome.ctb</div>
<div class="a" style="left:1482px;top:514px;width:297px;height:20px;background:#f0f0f0;border:1px solid #a9a9a9"></div>
<div class="a" style="left:1762px;top:515px;width:16px;height:18px;background:#e8e8e8;border-left:1px solid #b9b9b9"></div>
<svg style="left:1765px;top:522px" width="10" height="6" viewBox="0 0 10 6"><polyline points="0.8,0.8 5,4.8 9.2,0.8" fill="none" stroke="#b8b8b8" stroke-width="1.1"/></svg>
<div class="t" style="left:1483.14px;top:520.45px;font-size:11.30px;transform:scaleX(0.9463);color:#8a8a8a;">ByColor</div>
<div class="a" style="left:1482px;top:536px;width:297px;height:20px;background:#b3cff0;border:1px solid #a9a9a9"></div>
<div class="t" style="left:1483.11px;top:542.45px;font-size:11.30px;transform:scaleX(0.9885);color:#000;">None</div>
<svg style="left:1453px;top:470px" width="18" height="18" viewBox="0 0 18 18"><circle cx="9" cy="9" r="7.8" fill="none" stroke="#7fb8e0" stroke-width="1"/><path d="M1,9 L17,9" stroke="#50606c" stroke-width="1.6"/><path d="M9,3.5 L9,14.5" stroke="#8cc63f" stroke-width="1.4"/><polygon points="6.5,5 11.5,5 9,2.3" fill="#8cc63f"/><polygon points="6.5,13 11.5,13 9,15.7" fill="#8cc63f"/></svg>
<svg style="left:1453px;top:492px" width="18" height="18" viewBox="0 0 18 18"><rect x="1" y="1.5" width="11" height="10" fill="#fff" stroke="#333" stroke-width="1"/><rect x="1" y="1.5" width="11" height="2" fill="#1e88e5"/><rect x="2.8" y="5" width="1.6" height="5" fill="#c8102e"/><rect x="5.5" y="5" width="1.6" height="5" fill="#3aaa35"/><rect x="8.2" y="5" width="1.6" height="5" fill="#1e88e5" opacity="0.6"/><path d="M16.5,2 L10,14" stroke="#f5b400" stroke-width="2"/><path d="M10.5,13 Q9,17 6,17 Q8,15 9,12.5 Z" fill="#222"/></svg>
<svg style="left:1453px;top:514px" width="18" height="18" viewBox="0 0 18 18"><rect x="1" y="1.5" width="3" height="11" fill="#c8102e"/><rect x="5.5" y="1.5" width="3" height="11" fill="#3aaa35"/><path d="M10,1.5 L13,1.5 L13,12.5 L10,12.5 Z" fill="none" stroke="#1e88e5" stroke-width="1" stroke-dasharray="1.5,1"/><path d="M16.5,2 L10,14" stroke="#f5b400" stroke-width="2"/><path d="M10.5,13 Q9,17 6,17 Q8,15 9,12.5 Z" fill="#222"/></svg>
<svg style="left:1453px;top:536px" width="18" height="18" viewBox="0 0 18 18"><rect x="1" y="1" width="3.5" height="15" fill="#c8102e"/><rect x="6" y="1" width="3" height="8" fill="#3aaa35"/><polygon points="11,1 16,1 11,6" fill="#1e88e5"/><path d="M1,17 L16,2" stroke="#f0f0f0" stroke-width="1.5"/><path d="M8,11.5 L16,11.5 M6,14 L16,14 M4,16.5 L16,16.5 M10,9 L16,9 M13,6.5 L16,6.5" stroke="#111" stroke-width="1.3"/></svg>
<div class="a" style="left:1443px;top:563px;width:336px;height:20px;background:#e0e4fc;border:1px solid #a4a4a4"></div>
<div class="t" style="left:1447.94px;top:568.48px;font-size:11.50px;font-weight:bold;transform:scaleX(1.0966);color:#000;">View</div>
<svg style="left:1763px;top:570px" width="11" height="6" viewBox="0 0 11 6"><polygon points="0.5,5.8 10.5,5.8 5.5,0.3" fill="#111"/></svg>
<div class="a" style="left:1443px;top:583px;width:337px;height:122px;background:transparent;border-left:1px solid #d5d5d5;border-right:1px solid #e0e0e0;border-bottom:1px solid #e2e2e2"></div>
<div class="a" style="left:1482px;top:596px;width:297px;height:20px;background:#b3cff0;border:1px solid #a9a9a9"></div>
<div class="t" style="left:1484.34px;top:602.45px;font-size:11.30px;transform:scaleX(1.0191);color:#000;">12.562</div>
<div class="a" style="left:1482px;top:618px;width:297px;height:20px;background:#b3cff0;border:1px solid #a9a9a9"></div>
<div class="t" style="left:1484.32px;top:624.45px;font-size:11.30px;transform:scaleX(1.0422);color:#000;">11.245</div>
<div class="a" style="left:1482px;top:640px;width:297px;height:20px;background:#b3cff0;border:1px solid #a9a9a9"></div>
<div class="t" style="left:1483.91px;top:646.45px;font-size:11.30px;transform:scaleX(1.0878);color:#000;">0</div>
<div class="a" style="left:1482px;top:662px;width:297px;height:20px;background:#b3cff0;border:1px solid #a9a9a9"></div>
<div class="t" style="left:1483.80px;top:668.45px;font-size:11.30px;transform:scaleX(1.0591);color:#000;">25.5</div>
<div class="a" style="left:1482px;top:684px;width:297px;height:20px;background:#b3cff0;border:1px solid #a9a9a9"></div>
<div class="t" style="left:1483.80px;top:690.45px;font-size:11.30px;transform:scaleX(1.0591);color:#000;">25.5</div>
<svg style="left:1453px;top:597px" width="18" height="18" viewBox="0 0 18 18"><path d="M13.2,12.5 A6.5,6.5 0 1,1 14.2,5.5" fill="none" stroke="#333" stroke-width="1"/><circle cx="8.5" cy="8" r="1.4" fill="#e0a000"/><text x="11.2" y="16.5" font-family="Liberation Sans" font-size="6.5" fill="#333">X</text></svg>
<svg style="left:1453px;top:619px" width="18" height="18" viewBox="0 0 18 18"><path d="M13.2,12.5 A6.5,6.5 0 1,1 14.2,5.5" fill="none" stroke="#333" stroke-width="1"/><circle cx="8.5" cy="8" r="1.4" fill="#e0a000"/><text x="11.2" y="16.5" font-family="Liberation Sans" font-size="6.5" fill="#333">Y</text></svg>
<svg style="left:1453px;top:641px" width="18" height="18" viewBox="0 0 18 18"><path d="M13.2,12.5 A6.5,6.5 0 1,1 14.2,5.5" fill="none" stroke="#333" stroke-width="1"/><circle cx="8.5" cy="8" r="1.4" fill="#e0a000"/><text x="11.2" y="16.5" font-family="Liberation Sans" font-size="6.5" fill="#333">Z</text></svg>
<svg style="left:1455px;top:662px" width="14" height="20" viewBox="0 0 14 20"><path d="M2,1.5 L12,1.5 M2,17.5 L12,17.5" stroke="#666" stroke-width="1.2"/><path d="M7,3.5 L7,15.5" stroke="#1e88e5" stroke-width="1.1"/><polygon points="5.2,5 8.8,5 7,2.5" fill="#1e88e5"/><polygon points="5.2,14 8.8,14 7,16.5" fill="#1e88e5"/></svg>
<svg style="left:1453px;top:687px" width="18" height="14" viewBox="0 0 18 14"><path d="M1,2 L1,12 M17,2 L17,12" stroke="#666" stroke-width="1.2"/><path d="M3,7 L15,7" stroke="#1e88e5" stroke-width="1.1"/><polygon points="4.5,5.2 4.5,8.8 2.2,7" fill="#1e88e5"/><polygon points="13.5,5.2 13.5,8.8 15.8,7" fill="#1e88e5"/></svg>
<div class="a" style="left:1443px;top:711px;width:336px;height:20px;background:#e0e4fc;border:1px solid #a4a4a4"></div>
<div class="t" style="left:1447.13px;top:716.48px;font-size:11.50px;font-weight:bold;transform:scaleX(1.1662);color:#000;">Misc</div>
<svg style="left:1763px;top:718px" width="11" height="6" viewBox="0 0 11 6"><polygon points="0.5,5.8 10.5,5.8 5.5,0.3" fill="#111"/></svg>
<div class="a" style="left:1443px;top:731px;width:337px;height:122px;background:transparent;border-left:1px solid #d5d5d5;border-right:1px solid #e0e0e0;border-bottom:1px solid #e2e2e2"></div>
<div class="a" style="left:1482px;top:744px;width:297px;height:20px;background:#fff;border:1px solid #a9a9a9"></div>
<div class="a" style="left:1762px;top:745px;width:16px;height:18px;background:#e1e1e1;border-left:1px solid #b9b9b9"></div>
<svg style="left:1765px;top:752px" width="10" height="6" viewBox="0 0 10 6"><polyline points="0.8,0.8 5,4.8 9.2,0.8" fill="none" stroke="#555" stroke-width="1.1"/></svg>
<div class="t" style="left:1484.28px;top:750.45px;font-size:11.30px;transform:scaleX(1.0870);color:#000;">1:1</div>
<div class="a" style="left:1482px;top:766px;width:297px;height:20px;background:#fff;border:1px solid #a9a9a9"></div>
<div class="a" style="left:1762px;top:767px;width:16px;height:18px;background:#e1e1e1;border-left:1px solid #b9b9b9"></div>
<svg style="left:1765px;top:774px" width="10" height="6" viewBox="0 0 10 6"><polyline points="0.8,0.8 5,4.8 9.2,0.8" fill="none" stroke="#555" stroke-width="1.1"/></svg>
<div class="t" style="left:1483.62px;top:772.45px;font-size:11.30px;transform:scaleX(0.9808);color:#000;">Yes</div>
<div class="a" style="left:1482px;top:788px;width:297px;height:20px;background:#fff;border:1px solid #a9a9a9"></div>
<div class="a" style="left:1762px;top:789px;width:16px;height:18px;background:#e1e1e1;border-left:1px solid #b9b9b9"></div>
<svg style="left:1765px;top:796px" width="10" height="6" viewBox="0 0 10 6"><polyline points="0.8,0.8 5,4.8 9.2,0.8" fill="none" stroke="#555" stroke-width="1.1"/></svg>
<div class="t" style="left:1483.62px;top:794.45px;font-size:11.30px;transform:scaleX(0.9808);color:#000;">Yes</div>
<div class="a" style="left:1482px;top:810px;width:297px;height:20px;background:#fff;border:1px solid #a9a9a9"></div>
<div class="a" style="left:1762px;top:811px;width:16px;height:18px;background:#e1e1e1;border-left:1px solid #b9b9b9"></div>
<svg style="left:1765px;top:818px" width="10" height="6" viewBox="0 0 10 6"><polyline points="0.8,0.8 5,4.8 9.2,0.8" fill="none" stroke="#555" stroke-width="1.1"/></svg>
<div class="t" style="left:1483.62px;top:816.45px;font-size:11.30px;transform:scaleX(0.9808);color:#000;">Yes</div>
<div class="a" style="left:1482px;top:832px;width:297px;height:20px;background:#b3cff0;border:1px solid #a9a9a9"></div>
<div class="t" style="left:1456.30px;top:746.21px;font-size:17.50px;transform:scaleX(0.9796);color:#111;-webkit-text-stroke:0.45px #111;">A</div>
<svg style="left:1453px;top:767px" width="18" height="18" viewBox="0 0 18 18"><rect x="1.2" y="1.2" width="15.6" height="15.6" rx="1.5" fill="#f4f6f8" stroke="#6ab0e8" stroke-width="1.2"/></svg>
<svg style="left:1453px;top:767px" width="18" height="18" viewBox="0 0 18 18"><path d="M6.7,10.8 L6.7,4.6 M6.7,10.8 L12.8,10.8 M6.7,10.8 L3.8,13.8" stroke="#1a1a1a" stroke-width="1.1" fill="none"/><polygon points="5,4.8 8.4,4.8 6.7,2.6" fill="#1a1a1a"/><polygon points="12.6,9.1 12.6,12.5 14.8,10.8" fill="#1a1a1a"/><circle cx="3.6" cy="14" r="1.1" fill="#1a1a1a"/></svg>
<svg style="left:1452px;top:789px" width="22" height="20" viewBox="0 0 22 20"><path d="M6.0,13.0 L6.0,6.0 M6.0,13.0 L13.7,13.0 M6.0,13.0 L2.5,16.5" stroke="#1a1a1a" stroke-width="1.3" fill="none"/><polygon points="4.0,6.5 8.0,6.5 6.0,4.0" fill="#1a1a1a"/><polygon points="13.2,11.0 13.2,15.0 15.7,13.0" fill="#1a1a1a"/><polygon points="1.0,18.0 1.0,14.5 4.5,18.0" fill="#1a1a1a"/><text x="10" y="6" font-family="Liberation Sans" font-size="7" fill="#222">0.0</text></svg>
<svg style="left:1452px;top:811px" width="22" height="20" viewBox="0 0 22 20"><path d="M6.0,12.8 L6.0,6.2 M6.0,12.8 L13.7,12.8 M6.0,12.8 L2.5,16.3" stroke="#1a1a1a" stroke-width="1.3" fill="none"/><polygon points="4.0,6.7 8.0,6.7 6.0,4.2" fill="#1a1a1a"/><polygon points="13.2,10.8 13.2,14.8 15.7,12.8" fill="#1a1a1a"/><polygon points="1.0,17.8 1.0,14.3 4.5,17.8" fill="#1a1a1a"/><circle cx="15.4" cy="3.4" r="2.5" fill="#3aaa35"/></svg>
<svg style="left:1452px;top:833px" width="22" height="20" viewBox="0 0 22 20"><path d="M6.0,12.8 L6.0,6.2 M6.0,12.8 L13.7,12.8 M6.0,12.8 L2.5,16.3" stroke="#1a1a1a" stroke-width="1.3" fill="none"/><polygon points="4.0,6.7 8.0,6.7 6.0,4.2" fill="#1a1a1a"/><polygon points="13.2,10.8 13.2,14.8 15.7,12.8" fill="#1a1a1a"/><polygon points="1.0,17.8 1.0,14.3 4.5,17.8" fill="#1a1a1a"/><text x="11.6" y="7.8" font-family="Liberation Sans" font-weight="bold" font-size="9" fill="#222">A</text></svg>
<div class="a" style="left:1818px;top:165px;width:25px;height:945px;background:#c0c0c0;border:1px solid #8c8c8c"></div>
<svg style="left:1825px;top:172px" width="10" height="9" viewBox="0 0 10 9"><path d="M1,1 L9,8 M9,1 L1,8" stroke="#111" stroke-width="1.6"/></svg>
<svg style="left:1824px;top:193px" width="12" height="16" viewBox="0 0 12 16"><rect x="2" y="1" width="8" height="1.6" fill="#333"/><path d="M3.6,2.5 L8.4,2.5 L8.4,8.5 L10.3,10.5 L1.7,10.5 L3.6,8.5 Z" fill="#333"/><path d="M6,10.5 L6,15.5" stroke="#333" stroke-width="1.1"/></svg>
<div class="t" style="left:1824.5px;top:1084px;font-size:11.8px;font-weight:bold;transform:rotate(-90deg);transform-origin:0 0;letter-spacing:0.1px">Properties</div>
<svg style="left:1824px;top:1092px" width="13" height="14" viewBox="0 0 13 14"><rect x="1" y="1" width="2.5" height="3" fill="#ffb400"/><rect x="5" y="1" width="2.5" height="3" fill="#c8102e"/><rect x="9" y="1" width="2.5" height="3" fill="#3aaa35"/><path d="M1,6 L7,6 M1,10 L7,10" stroke="#888" stroke-width="0.8" stroke-dasharray="1.2,0.8"/><text x="7.5" y="12.5" font-size="7" font-family="Liberation Sans" fill="#444">A</text></svg>
<div class="a" style="left:1842px;top:168px;width:20px;height:74px;background:#f0f0f0;border:1px solid #d9d9d9;border-left:none"></div>
<div class="a" style="left:1842px;top:242px;width:20px;height:108px;background:#f0f0f0;border:1px solid #d9d9d9;border-left:none;border-top:none"></div>
<div class="a" style="left:1842px;top:350px;width:21px;height:74px;background:#fff;border:1px solid #d9d9d9;border-left:none"></div>
<div class="t" style="left:1846.5px;top:231px;font-size:11.5px;transform:rotate(-90deg) scaleX(0.93);transform-origin:0 0">HomeByMe</div>
<div class="t" style="left:1846.5px;top:340.5px;font-size:11.5px;transform:rotate(-90deg) scaleX(0.93);transform-origin:0 0">G-code Generator</div>
<div class="t" style="left:1846.5px;top:414.5px;font-size:11.5px;transform:rotate(-90deg) scaleX(0.93);transform-origin:0 0">Properties</div>
<div class="a" style="left:3px;top:1110px;width:1860px;height:2px;background:#fdfdfd;"></div>
<div class="a" style="left:3px;top:1112px;width:1860px;height:2px;background:#6e6e6e;"></div>
<div class="a" style="left:3px;top:1114px;width:1860px;height:23px;background:#c0c0c0;border-left:1px solid #9a9a9a"></div>
<div class="a" style="left:3px;top:1137px;width:1860px;height:2px;background:#8a8a8a;"></div>
<div class="a" style="left:3px;top:1139px;width:1841px;height:75px;background:#fff;border-left:1px solid #a0a0a0"></div>
<div class="a" style="left:1844px;top:1139px;width:19px;height:75px;background:#f0f0f0;"></div>
<div class="a" style="left:3px;top:1214px;width:1860px;height:1px;background:#a0a0a0;"></div>
<div class="a" style="left:3px;top:1215px;width:1861px;height:16px;background:#fff;"></div>
<div class="t" style="left:6.44px;top:1122.31px;font-size:11.70px;font-weight:bold;transform:scaleX(0.9874);color:#000;">Command window</div>
<div class="t" style="left:8.00px;top:1150.61px;font-size:12.30px;transform:scaleX(1.0795);color:#000;">Options:</div>
<div class="t" style="left:60.46px;top:1150.61px;font-size:12.30px;transform:scaleX(1.0388);color:#1f6fc5;">Center</div>
<div class="a" style="left:61px;top:1162px;width:9px;height:1px;background:#1f6fc5;"></div>
<div class="t" style="left:102.47px;top:1150.61px;font-size:12.30px;transform:scaleX(1.0677);color:#000;">or</div>
<div class="t" style="left:9.01px;top:1166.61px;font-size:12.30px;font-weight:bold;transform:scaleX(1.0587);color:#000;">Specify first corner of box»</div>
<div class="t" style="left:181.87px;top:1166.61px;font-size:12.30px;transform:scaleX(1.0701);color:#000;">0,0,0</div>
<div class="t" style="left:8.00px;top:1182.61px;font-size:12.30px;transform:scaleX(1.0795);color:#000;">Options:</div>
<div class="t" style="left:60.44px;top:1182.61px;font-size:12.30px;transform:scaleX(1.0701);color:#1f6fc5;">Cube,</div>
<div class="a" style="left:61px;top:1194px;width:9px;height:1px;background:#1f6fc5;"></div>
<div class="t" style="left:97.95px;top:1182.61px;font-size:12.30px;transform:scaleX(1.0682);color:#1f6fc5;">Length</div>
<div class="a" style="left:99px;top:1194px;width:7px;height:1px;background:#1f6fc5;"></div>
<div class="t" style="left:142.00px;top:1182.61px;font-size:12.30px;transform:scaleX(1.0089);color:#000;">or</div>
<div class="t" style="left:9.01px;top:1198.61px;font-size:12.30px;font-weight:bold;transform:scaleX(1.0683);color:#000;">Specify other corner»</div>
<div class="t" style="left:146.85px;top:1198.61px;font-size:12.30px;transform:scaleX(1.0659);color:#000;">@20,20,20</div>
<div class="t" style="left:6.85px;top:1217.21px;font-size:12.30px;transform:scaleX(1.0526);color:#000;">Command:</div>
<svg style="left:1824px;top:1120px" width="10" height="10" viewBox="0 0 10 10"><rect x="3.5" y="0.8" width="5.6" height="5" fill="none" stroke="#111" stroke-width="1.3"/><rect x="0.8" y="3.6" width="5.6" height="5.4" fill="#c0c0c0" stroke="#111" stroke-width="1.3"/></svg>
<svg style="left:1847px;top:1121px" width="9" height="9" viewBox="0 0 9 9"><path d="M0.7,0.7 L8.3,8.3 M8.3,0.7 L0.7,8.3" stroke="#111" stroke-width="1.5"/></svg>
<svg style="left:1849px;top:1145px" width="10" height="6" viewBox="0 0 10 6"><polygon points="0.5,5.5 9.5,5.5 5,0.5" fill="#111"/></svg>
<div class="a" style="left:1847px;top:1177px;width:14px;height:9px;background:#d2d2d2;"></div>
<svg style="left:1849px;top:1203px" width="10" height="6" viewBox="0 0 10 6"><polygon points="0.5,0.5 9.5,0.5 5,5.5" fill="#111"/></svg>
<svg style="left:1852px;top:1255px" width="11" height="11" viewBox="0 0 11 11"><rect x="8" y="0" width="2" height="2" fill="#fff"/><rect x="4" y="4" width="2" height="2" fill="#fff"/><rect x="8" y="4" width="2" height="2" fill="#fff"/><rect x="0" y="8" width="2" height="2" fill="#fff"/><rect x="4" y="8" width="2" height="2" fill="#fff"/><rect x="8" y="8" width="2" height="2" fill="#fff"/></svg>
<div class="t" style="left:4.59px;top:1244.48px;font-size:11.50px;transform:scaleX(0.9911);color:#000;">DraftSight 2019 x64</div>
<div class="a" style="left:695px;top:1234px;width:97px;height:30px;background:transparent;border:1px solid #c9c9c9"></div>
<div class="a" style="left:798px;top:1234px;width:254px;height:30px;background:transparent;border:1px solid #c9c9c9"></div>
<div class="a" style="left:1058px;top:1234px;width:129px;height:30px;background:transparent;border:1px solid #c9c9c9"></div>
<div class="a" style="left:663px;top:1237px;width:25px;height:24px;background:#e1e1e1;border:1px solid #b3b3b3"></div>
<div class="a" style="left:698px;top:1237px;width:25px;height:24px;background:#e1e1e1;border:1px solid #b3b3b3"></div>
<div class="a" style="left:731px;top:1237px;width:25px;height:24px;background:#e1e1e1;border:1px solid #b3b3b3"></div>
<div class="a" style="left:764px;top:1237px;width:25px;height:24px;background:#e1e1e1;border:1px solid #b3b3b3"></div>
<div class="a" style="left:801px;top:1237px;width:25px;height:24px;background:#e1e1e1;border:1px solid #b3b3b3"></div>
<div class="a" style="left:834px;top:1237px;width:25px;height:24px;background:#cce4f7;border:1px solid #1262b3"></div>
<div class="a" style="left:867px;top:1237px;width:25px;height:24px;background:#cce4f7;border:1px solid #1262b3"></div>
<div class="a" style="left:900px;top:1237px;width:25px;height:24px;background:#cce4f7;border:1px solid #1262b3"></div>
<div class="a" style="left:933px;top:1237px;width:25px;height:24px;background:#cce4f7;border:1px solid #1262b3"></div>
<div class="a" style="left:966px;top:1239px;width:83px;height:19px;background:#cce4f7;border:1px solid #0d5aa7"></div>
<div class="t" style="left:971.37px;top:1244.16px;font-size:12.00px;transform:scaleX(0.9702);color:#000;">Dynamic CCS</div>
<div class="a" style="left:1061px;top:1239px;width:94px;height:20px;background:#e1e1e1;border:1px solid #adadad"></div>
<div class="t" style="left:1065.20px;top:1244.06px;font-size:12.00px;transform:scaleX(1.0481);color:#000;">Annotation</div>
<svg style="left:1136px;top:1245px" width="12" height="8" viewBox="0 0 12 8"><polygon points="0.5,0.5 11.5,0.5 6,7" fill="#111"/></svg>
<svg style="left:666px;top:1240px" width="20" height="20" viewBox="0 0 20 20"><path d="M3.5,2 L9.5,2 L11.5,4.5 L9.5,7 L3.5,7 L1.5,4.5 Z" fill="#8ea4bb" stroke="#222" stroke-width="1"/><rect x="4" y="7" width="5" height="8" fill="#8ea4bb" stroke="#222" stroke-width="1"/><path d="M8.5,10.5 L14,8.5 L19,10.5 L13.5,12.5 Z M8.5,13.5 L14,11.5 L19,13.5 L13.5,15.5 Z" fill="#ffc20e" stroke="#6a5000" stroke-width="0.6"/></svg>
<svg style="left:700px;top:1240px" width="20" height="20" viewBox="0 0 20 20"><path d="M1,4.5 L19,4.5 M1,9.5 L19,9.5 M1,14.5 L19,14.5 M4.5,1 L4.5,19 M9.5,1 L9.5,19 M14.5,1 L14.5,19" stroke="#a9c3cf" stroke-width="1"/><circle cx="5" cy="4.5" r="2.1" fill="#c8102e"/><path d="M7,6 L7,18 L9.5,15.5 L11.5,19.5 L13.5,18.5 L11.5,14.5 L15,14.5 Z" fill="#fff" stroke="#222" stroke-width="1"/></svg>
<svg style="left:733px;top:1240px" width="20" height="20" viewBox="0 0 20 20"><path d="M2,4.5 L18,4.5 M2,8.5 L18,8.5 M2,12.5 L18,12.5 M2,16.5 L18,16.5 M4.5,2 L4.5,19 M8.5,2 L8.5,19 M12.5,2 L12.5,19 M16.5,2 L16.5,19" stroke="#111" stroke-width="1.15"/></svg>
<svg style="left:766px;top:1240px" width="20" height="20" viewBox="0 0 20 20"><path d="M5,5 L15,2.5 L15,17.5 L5,15 Z" fill="none" stroke="#333" stroke-width="1.1"/><path d="M1.5,10 L18.5,10" stroke="#333" stroke-width="1" stroke-dasharray="2.5,1.2"/></svg>
<svg style="left:803px;top:1240px" width="20" height="20" viewBox="0 0 20 20"><circle cx="7.5" cy="12" r="5.3" fill="none" stroke="#333" stroke-width="1.1"/><path d="M7.5,1.5 L7.5,9 M4,4 L16,17 M15,3 L9,9.5 M13,12 L18,12" stroke="#1e88e5" stroke-width="0.9"/><polygon points="7,9 10,11.5 6.5,13" fill="#1e88e5"/></svg>
<svg style="left:836px;top:1240px" width="20" height="20" viewBox="0 0 20 20"><text x="0.5" y="9.5" font-family="Liberation Sans" font-size="9" fill="#1e88e5">E</text><path d="M2,17.5 L15,17.5" stroke="#333" stroke-width="1" stroke-dasharray="2,1.5"/><path d="M17.5,1.5 L17.5,14" stroke="#999" stroke-width="0.8" stroke-dasharray="1.5,1.5"/><path d="M6.5,3 L6.5,15 L9,12.5 L11,16.5 L13,15.5 L11,11.5 L14.5,11.5 Z" fill="#fff" stroke="#222" stroke-width="1"/><circle cx="16.4" cy="16.4" r="2.2" fill="#c8102e"/></svg>
<svg style="left:869px;top:1240px" width="20" height="20" viewBox="0 0 20 20"><text x="1.5" y="9" font-family="Liberation Sans" font-size="9" fill="#1e88e5">E</text><path d="M10,5 L10,18 M7.5,9 L12.5,9 M6.5,12 L13.5,12 M5.5,15 L14.5,15 M4,18 L16,18" stroke="#333" stroke-width="1.1"/></svg>
<svg style="left:902px;top:1240px" width="20" height="20" viewBox="0 0 20 20"><path d="M2.5,2.5 L11,2.5 L17.5,9 L17.5,17.5 L2.5,17.5 Z" fill="none" stroke="#333" stroke-width="1.1" stroke-dasharray="2.2,1.3"/><path d="M5.5,5.5 L10,5.5 L14.5,10 L14.5,14.5 L5.5,14.5 Z" fill="none" stroke="#333" stroke-width="1.1"/></svg>
<svg style="left:935px;top:1240px" width="20" height="20" viewBox="0 0 20 20"><path d="M6.5,6.5 L16.5,6.5 L16.5,18 L6.5,18 Z" fill="none" stroke="#333" stroke-width="1.1"/><path d="M4,4 Q4,2 6,2 L16,2 Q18,2 18,4" fill="none" stroke="#8ab" stroke-width="0.8" stroke-dasharray="1.5,1.5"/><rect x="10" y="1" width="4" height="3" fill="#1e88e5"/><rect x="1" y="10" width="3" height="4" fill="#1e88e5"/></svg>
<div class="t" style="left:1162.12px;top:1244.78px;font-size:11.50px;transform:scaleX(0.9887);color:#000;">(1:1)</div>
<div class="t" style="left:1192.94px;top:1244.78px;font-size:11.50px;transform:scaleX(0.9501);color:#000;">(69.982,55.655,0)</div>
<div class="a" style="left:0px;top:0px;width:1866px;height:1269px;background:transparent;border:1px solid #17366c"></div>
<div class="a" style="left:1864px;top:53px;width:1px;height:1215px;background:#fbfbf8;"></div>
<div class="a" style="left:1px;top:1267px;width:1864px;height:1px;background:#fbfbf8;"></div>
</body></html>
